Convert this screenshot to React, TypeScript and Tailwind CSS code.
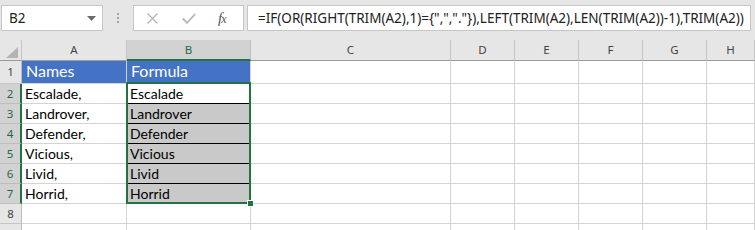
import React from "react";

const COLS = ["A", "B", "C", "D", "E", "F", "G", "H"];
const NAMES = ["Escalade,", "Landrover,", "Defender,", "Vicious,", "Livid,", "Horrid,"];
const RESULTS = ["Escalade", "Landrover", "Defender", "Vicious", "Livid", "Horrid"];

const headFont = { fontFamily: '"Noto Sans", "Open Sans", sans-serif' };
const cellFont = { fontFamily: 'Lato, "Noto Sans", sans-serif' };

function ColHeader({ c }: { c: string }) {
  const sel = c === "B";
  return (
    <div
      className={
        sel
          ? "h-[21px] bg-[#d2d2d2] border-r border-r-[#bdbdbd] border-b-2 border-b-[#217346] text-[#1d6b40] text-[11.5px] leading-[19px] text-center"
          : "h-[21px] bg-[#e6e6e6] border-r border-r-[#c4c4c4] border-b border-b-[#9b9b9b] text-[#444444] text-[11.5px] leading-[19px] text-center"
      }
      style={headFont}
    >
      {c}
    </div>
  );
}

function RowHeader({ n, first, hideLabel }: { n: number; first?: boolean; hideLabel?: boolean }) {
  const sel = n >= 2 && n <= 7;
  return (
    <div
      className={
        sel
          ? "h-[20px] bg-[#d2d2d2] border-r-2 border-r-[#217346] border-b border-b-[#bdbdbd] text-[#1d6b40] text-[11.5px] leading-[19px] text-center"
          : first
          ? "h-[23px] bg-[#e6e6e6] border-r border-r-[#bdbdbd] border-b border-b-[#c6c6c6] text-[#444444] text-[11.5px] leading-[22px] text-center"
          : "h-[20px] bg-[#e6e6e6] border-r border-r-[#bdbdbd] border-b border-b-[#c6c6c6] text-[#444444] text-[11.5px] leading-[19px] text-center"
      }
      style={headFont}
    >
      {hideLabel ? "" : n}
    </div>
  );
}

export default function App() {
  const formula = '=IF(OR(RIGHT(TRIM(A2),1)={",","."}),LEFT(TRIM(A2),LEN(TRIM(A2))-1),TRIM(A2))';
  return (
    <div className="w-[755px] h-[230px] overflow-hidden bg-white">
      {/* Formula bar */}
      <div className="h-[40px] bg-[#e6e6e6] flex items-start pt-[5px]">
        <div className="ml-[1px] w-[102px] h-[26px] bg-white border border-[#c6c6c6] flex items-center justify-between pl-[7px] pr-[6px]">
          <span className="text-[13.5px] text-[#222222]" style={headFont}>
            B2
          </span>
          <svg width="9" height="5" viewBox="0 0 9 5">
            <path d="M0 0 L9 0 L4.5 5 Z" fill="#6b6b6b" />
          </svg>
        </div>
        <div className="w-[30px] h-[26px] flex flex-col items-center justify-center gap-[2px]">
          <div className="w-[2px] h-[2px] bg-[#a6a6a6]" />
          <div className="w-[2px] h-[2px] bg-[#a6a6a6]" />
          <div className="w-[2px] h-[2px] bg-[#a6a6a6]" />
        </div>
        <div className="w-[111px] h-[26px] bg-white border border-[#c6c6c6] flex items-center pl-[13px]">
          <svg width="11" height="11" viewBox="0 0 11 11">
            <path d="M0.5 0.5 L10.5 10.5 M10.5 0.5 L0.5 10.5" stroke="#b5b5b5" strokeWidth="1.3" fill="none" />
          </svg>
          <svg width="14" height="11" viewBox="0 0 14 11" className="ml-[24px]">
            <path d="M0.8 5.5 L5 9.8 L13.2 1" stroke="#b5b5b5" strokeWidth="1.8" fill="none" />
          </svg>
          <span
            className="ml-[22px] italic text-[15px] text-[#555555] leading-none tracking-[-1px]"
            style={{ fontFamily: '"Liberation Serif", serif' }}
          >
            f<span className="text-[12px]">x</span>
          </span>
        </div>
        <div className="ml-[3px] w-[504px] h-[26px] bg-white border border-[#c6c6c6] flex items-center pl-[10px]">
          <span className="text-[13.5px] text-[#222222] whitespace-nowrap" style={headFont}>
            {formula}
          </span>
        </div>
      </div>

      {/* Sheet */}
      <div className="relative">
        <div className="grid grid-cols-[22px_105px_124px_200px_64px_64px_64px_64px_1fr]">
          {/* header row */}
          <div className="h-[21px] bg-[#e6e6e6] border-r border-r-[#c4c4c4] border-b border-b-[#9b9b9b] relative">
            <svg width="12" height="11" viewBox="0 0 12 11" className="absolute right-[3px] bottom-[2px]">
              <path d="M12 0 L12 11 L0 11 Z" fill="#b4b4b4" />
            </svg>
          </div>
          {COLS.map((c) => (
            <ColHeader key={c} c={c} />
          ))}

          {/* row 1 */}
          <RowHeader n={1} first />
          <div className="h-[23px] bg-[#4472c4] border-r border-r-[#c9d4ea] border-b border-b-[#d4d4d4] pl-[4px] text-white text-[16px] leading-[20px]" style={cellFont}>
            Names
          </div>
          <div className="h-[23px] bg-[#4472c4] border-r border-r-[#d4d4d4] border-b border-b-[#d4d4d4] pl-[4px] text-white text-[16px] leading-[20px]" style={cellFont}>
            Formula
          </div>
          {COLS.slice(2).map((c) => (
            <div key={c} className="h-[23px] border-r border-r-[#d4d4d4] border-b border-b-[#d4d4d4]" />
          ))}

          {/* rows 2-7 */}
          {NAMES.map((name, i) => (
            <React.Fragment key={name}>
              <RowHeader n={i + 2} />
              <div className="h-[20px] border-r border-r-[#d4d4d4] border-b border-b-[#d4d4d4] pl-[3px] text-black text-[14px] leading-[19px]" style={cellFont}>
                {name}
              </div>
              <div
                className={
                  i === 0
                    ? "h-[20px] bg-white border-r border-r-[#d4d4d4] border-b border-b-black pl-[3px] text-black text-[14px] leading-[19px]"
                    : i === 5
                    ? "h-[20px] bg-[#c9c9c9] border-r border-r-[#d4d4d4] border-b border-b-[#d4d4d4] pl-[3px] text-black text-[14px] leading-[19px]"
                    : "h-[20px] bg-[#c9c9c9] border-r border-r-[#d4d4d4] border-b border-b-black pl-[3px] text-black text-[14px] leading-[19px]"
                }
                style={cellFont}
              >
                {RESULTS[i]}
              </div>
              {COLS.slice(2).map((c) => (
                <div key={c} className="h-[20px] border-r border-r-[#d4d4d4] border-b border-b-[#d4d4d4]" />
              ))}
            </React.Fragment>
          ))}

          {/* rows 8-9 */}
          {[8, 9].map((n) => (
            <React.Fragment key={n}>
              <RowHeader n={n} hideLabel={n === 9} />
              {COLS.map((c) => (
                <div key={c} className="h-[20px] border-r border-r-[#d4d4d4] border-b border-b-[#d4d4d4]" />
              ))}
            </React.Fragment>
          ))}
        </div>

        {/* selection border B2:B7 */}
        <div className="absolute left-[126px] top-[42px] w-[125px] h-[122px] border-2 border-[#217346] pointer-events-none" />
        {/* fill handle */}
        <div className="absolute left-[247px] top-[160px] w-[7px] h-[7px] bg-[#217346] border border-white" />
      </div>
    </div>
  );
}
